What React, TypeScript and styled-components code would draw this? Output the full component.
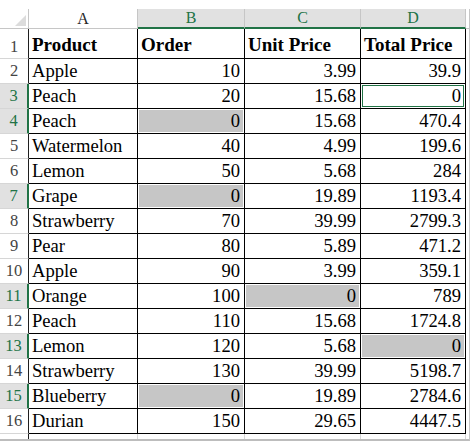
import styled, { createGlobalStyle } from "styled-components";

const GlobalStyle = createGlobalStyle`
  html, body {
    margin: 0;
    padding: 0;
    background: #ffffff;
  }
  body {
    font-family: "Liberation Serif", "Times New Roman", serif;
  }
`;

const GREEN = "#217346";
const HEAD_SEL = "#e1e1e1";
const SEP = "#c6c6c6";

const Page = styled.div`
  width: 471px;
  height: 443px;
  padding-top: 9px;
  box-sizing: border-box;
`;

const Sheet = styled.div`
  width: 470px;
  height: 432px;
  box-sizing: border-box;
  overflow: hidden;
  border-right: 1px solid ${SEP};
  border-bottom: 2px solid #bdbdbd;
  display: grid;
  grid-template-columns: 29px 109px 107px 116px 105px 1fr;
  grid-template-rows: 20px 30px repeat(16, 25px);
`;

const Corner = styled.div`
  box-sizing: border-box;
  border-right: 1px solid ${SEP};
  border-bottom: 1px solid ${SEP};
  display: flex;
  justify-content: flex-end;
  align-items: flex-end;
  padding: 0 2px 2px 0;
`;

const Triangle = styled.div`
  width: 11px;
  height: 11px;
  background: #dcdcdc;
  clip-path: polygon(100% 0, 100% 100%, 0 100%);
`;

const ColHeader = styled.div<{ $selected?: boolean }>`
  box-sizing: border-box;
  display: flex;
  align-items: center;
  justify-content: center;
  font-size: 16px;
  line-height: 16px;
  background: ${p => (p.$selected ? HEAD_SEL : "#ffffff")};
  color: ${p => (p.$selected ? GREEN : "#262626")};
  border-right: 1px solid ${SEP};
  border-bottom: ${p => (p.$selected ? `2px solid ${GREEN}` : `1px solid ${SEP}`)};
`;

const Blank = styled.div<{ $head?: boolean }>`
  background: #ffffff;
  box-sizing: border-box;
  border-bottom: ${p => (p.$head ? `1px solid ${SEP}` : "none")};
`;

const RowHeader = styled.div<{ $selected?: boolean; $tall?: boolean }>`
  box-sizing: border-box;
  display: flex;
  align-items: flex-end;
  justify-content: center;
  padding-bottom: ${p => (p.$tall ? "2px" : "3px")};
  font-size: 16.5px;
  line-height: 18px;
  background: ${p => (p.$selected ? HEAD_SEL : "#ffffff")};
  color: ${p => (p.$selected ? GREEN : "#444444")};
  border-bottom: 1px solid #d6d6d6;
  border-right: ${p => (p.$selected ? `2px solid ${GREEN}` : "1px solid #1f1f1f")};
`;

const Cell = styled.div<{
  $right?: boolean;
  $bold?: boolean;
  $fill?: boolean;
  $active?: boolean;
  $empty?: boolean;
}>`
  box-sizing: border-box;
  display: flex;
  align-items: flex-end;
  justify-content: ${p => (p.$right ? "flex-end" : "flex-start")};
  padding: ${p => (p.$bold ? "0 4px 3px 3px" : "0 4px 2px 3px")};
  font-size: ${p => (p.$bold ? "19px" : "18.6px")};
  font-weight: ${p => (p.$bold ? 700 : 400)};
  line-height: 20px;
  color: #000000;
  white-space: nowrap;
  background: ${p => (p.$fill ? "#c6c6c6" : "#ffffff")};
  border-right: 1px solid ${p => (p.$empty ? "#d6d6d6" : "#000000")};
  border-bottom: ${p => (p.$empty ? "none" : "1px solid #000000")};
  box-shadow: ${p =>
    p.$active
      ? `inset 0 0 0 1px #ffffff, inset 0 0 0 2px ${GREEN}`
      : p.$fill
      ? "inset 0 0 0 1px #ffffff"
      : "none"};
`;

type Row = [string, string, string, string];

const rows: Row[] = [
  ["Apple", "10", "3.99", "39.9"],
  ["Peach", "20", "15.68", "0"],
  ["Peach", "0", "15.68", "470.4"],
  ["Watermelon", "40", "4.99", "199.6"],
  ["Lemon", "50", "5.68", "284"],
  ["Grape", "0", "19.89", "1193.4"],
  ["Strawberry", "70", "39.99", "2799.3"],
  ["Pear", "80", "5.89", "471.2"],
  ["Apple", "90", "3.99", "359.1"],
  ["Orange", "100", "0", "789"],
  ["Peach", "110", "15.68", "1724.8"],
  ["Lemon", "120", "5.68", "0"],
  ["Strawberry", "130", "39.99", "5198.7"],
  ["Blueberry", "0", "19.89", "2784.6"],
  ["Durian", "150", "29.65", "4447.5"],
];

const selectedRows = [3, 4, 7, 11, 13, 15];

export default function App() {
  return (
    <Page>
      <GlobalStyle />
      <Sheet>
        <Corner>
          <Triangle />
        </Corner>
        <ColHeader>A</ColHeader>
        <ColHeader $selected>B</ColHeader>
        <ColHeader $selected>C</ColHeader>
        <ColHeader $selected>D</ColHeader>
        <Blank $head />

        <RowHeader $tall>1</RowHeader>
        <Cell $bold>Product</Cell>
        <Cell $bold>Order</Cell>
        <Cell $bold>Unit Price</Cell>
        <Cell $bold>Total Price</Cell>
        <Blank />

        {rows.map((r, i) => {
          const n = i + 2;
          const sel = selectedRows.includes(n);
          return [
            <RowHeader key={`h${n}`} $selected={sel}>
              {n}
            </RowHeader>,
            <Cell key={`a${n}`}>{r[0]}</Cell>,
            ...r.slice(1).map((v, j) => (
              <Cell
                key={`c${n}-${j}`}
                $right
                $fill={v === "0" && !(n === 3 && j === 2)}
                $active={n === 3 && j === 2}
              >
                {v}
              </Cell>
            )),
            <Blank key={`e${n}`} />,
          ];
        })}

        <RowHeader>17</RowHeader>
        <Cell $empty />
        <Cell $empty />
        <Cell $empty />
        <Cell $empty />
        <Blank />
      </Sheet>
    </Page>
  );
}
